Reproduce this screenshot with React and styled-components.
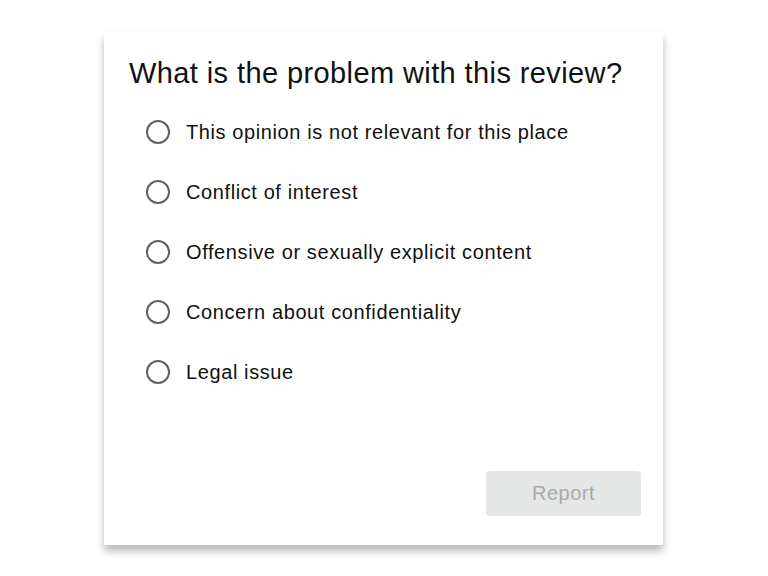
import React from "react";
import styled, { createGlobalStyle } from "styled-components";

const Global = createGlobalStyle`
  html, body { margin: 0; padding: 0; background: #ffffff; }
  body { font-family: "Liberation Sans", Arial, sans-serif; }
`;

const Page = styled.div`
  width: 768px;
  height: 576px;
  display: flex;
  padding: 32px 0 0 104px;
  box-sizing: border-box;
`;

const Card = styled.div`
  width: 559px;
  height: 513px;
  background: #fff;
  box-shadow: 0 6px 8px rgba(0, 0, 0, 0.28);
  box-sizing: border-box;
  padding: 24px 22px 29px 25px;
  display: flex;
  flex-direction: column;
`;

const Title = styled.h2`
  margin: 0;
  font-size: 29px;
  letter-spacing: 0.4px;
  font-weight: normal;
  color: #111;
  line-height: 34px;
`;

const Options = styled.div`
  display: flex;
  flex-direction: column;
  margin-top: 12px;
  padding-left: 17px;
`;

const Option = styled.label`
  display: flex;
  align-items: center;
  height: 60px;
  gap: 16px;
  font-size: 20px;
  letter-spacing: 0.6px;
  color: #111;
  cursor: pointer;
`;

const Circle = styled.span`
  width: 24px;
  height: 24px;
  border: 2px solid #5f6062;
  border-radius: 50%;
  box-sizing: border-box;
  flex: none;
`;

const Footer = styled.div`
  margin-top: auto;
  display: flex;
  justify-content: flex-end;
`;

const Button = styled.button`
  width: 155px;
  height: 45px;
  border: none;
  border-radius: 4px;
  background: #e5e6e6;
  color: #a9aaaa;
  font-family: "Liberation Sans", Arial, sans-serif;
  font-size: 20px;
  letter-spacing: 0.5px;
`;

const options = [
  "This opinion is not relevant for this place",
  "Conflict of interest",
  "Offensive or sexually explicit content",
  "Concern about confidentiality",
  "Legal issue",
];

export default function App() {
  return (
    <>
      <Global />
      <Page>
        <Card>
          <Title>What is the problem with this review?</Title>
          <Options>
            {options.map((o) => (
              <Option key={o}>
                <Circle />
                {o}
              </Option>
            ))}
          </Options>
          <Footer>
            <Button disabled>Report</Button>
          </Footer>
        </Card>
      </Page>
    </>
  );
}
